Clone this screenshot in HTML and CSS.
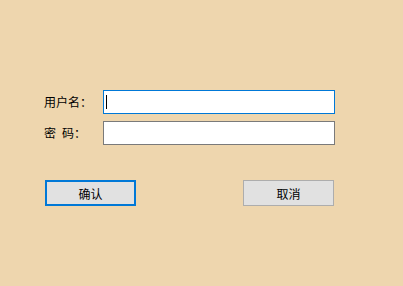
FILE: index.html
```html
<!DOCTYPE html>
<html lang="zh">
<head>
<meta charset="utf-8">
<title>登录</title>
<link rel="stylesheet" href="styles.css">
</head>
<body>
<div class="form">
  <div class="row">
    <label class="label">用户名：</label>
    <div class="textbox focused"><span class="caret"></span></div>
  </div>
  <div class="row row-second">
    <label class="label">密&ensp;码：</label>
    <div class="textbox"></div>
  </div>
  <div class="buttons">
    <button class="btn btn-default">确认</button>
    <button class="btn">取消</button>
  </div>
</div>
</body>
</html>
```
FILE: styles.css
```css
html, body {
  margin: 0;
  padding: 0;
  background: #EED6AE;
  width: 403px;
  height: 286px;
  overflow: hidden;
  font-family: "Noto Sans CJK SC", "Liberation Sans", sans-serif;
  font-size: 12px;
  color: #000;
}

.form {
  padding-top: 90px;
  padding-left: 44px;
  width: 291px;
}

.row {
  display: flex;
  align-items: center;
  height: 24px;
}

.row-second {
  margin-top: 7px;
}

.label {
  width: 59px;
  flex: none;
  line-height: 14px;
  white-space: pre;
}

.textbox {
  box-sizing: border-box;
  width: 232px;
  height: 24px;
  background: #fff;
  border: 1px solid #7A7A7A;
  display: flex;
  align-items: center;
  padding-left: 2px;
}

.textbox.focused {
  border-color: #0078D7;
}

.caret {
  display: block;
  width: 1px;
  height: 14px;
  background: #000;
}

.buttons {
  display: flex;
  justify-content: space-between;
  margin-top: 35px;
  margin-left: 1px;
  margin-right: 1px;
}

.btn {
  box-sizing: border-box;
  width: 91px;
  height: 26px;
  margin: 0;
  padding: 0;
  background: #E1E1E1;
  border: 1px solid #ADADAD;
  border-radius: 0;
  font-family: "Noto Sans CJK SC", "Liberation Sans", sans-serif;
  font-size: 12px;
  color: #000;
}

.btn-default {
  border: 2px solid #0078D7;
}
```
